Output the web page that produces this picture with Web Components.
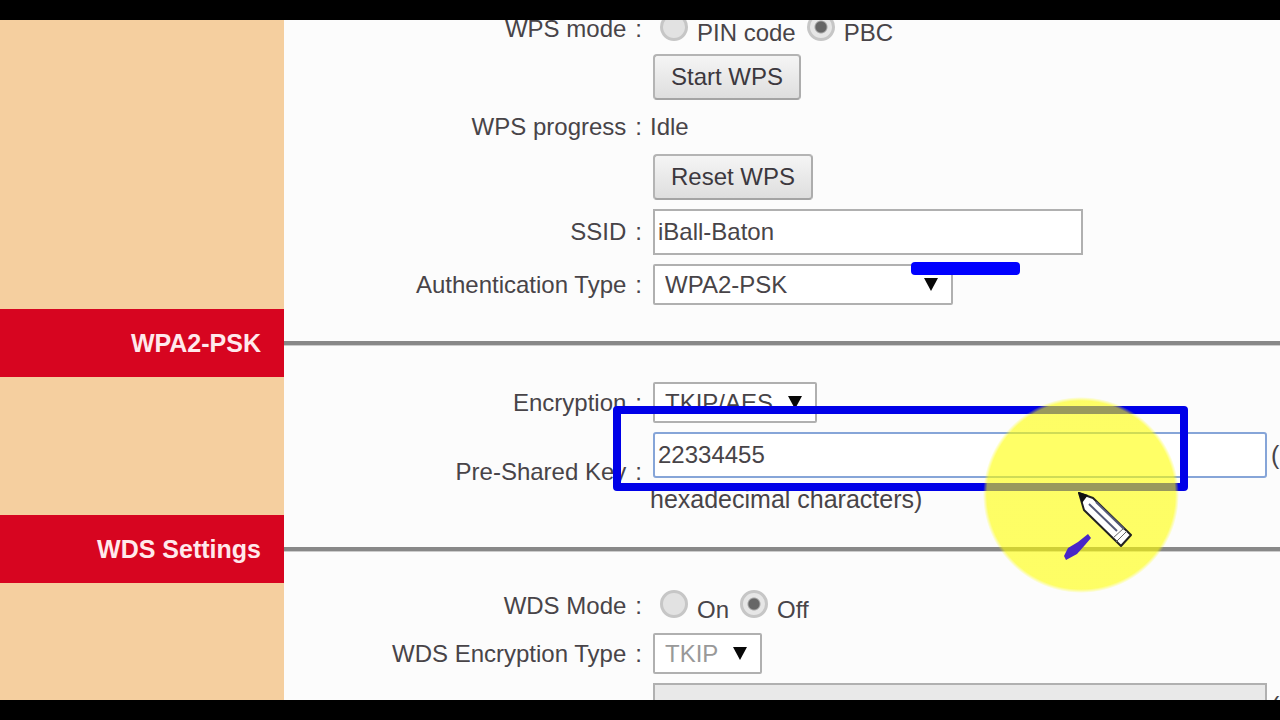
<!DOCTYPE html>
<html lang="en">
<head>
<meta charset="utf-8">
<title>Wireless Settings</title>
<style>
  body { margin: 0; background: #000; }
</style>
</head>
<body>
<wireless-page></wireless-page>

<template id="section-template">
  <style>
    :host { display: grid; grid-template-columns: 284px minmax(0, 1fr); flex: none; }
    :host(:last-of-type) { flex: 1 0 auto; }
    .title { display: none; align-items: center; justify-content: flex-end; height: 68px; padding-right: 23px; background: #d70520; color: #ffe9ec; box-sizing: border-box; }
    .rule { display: none; align-self: center; height: 4px; background: #888; border-bottom: 1px solid #ccc; }
    :host([titled]) .title { display: flex; }
    :host([titled]) .rule { display: block; }
    .side { background: #f5cf9f; }
    .rows { display: flex; flex-direction: column; gap: 9px; padding: 5px 0 4px; min-width: 0; }
    ::slotted(h2) { margin: 0; font-size: 25px; line-height: 28px; font-weight: bold; }
  </style>
  <div class="title"><slot name="title"></slot></div>
  <div class="rule"></div>
  <div class="side"></div>
  <div class="rows"><slot></slot></div>
</template>

<template id="row-template">
  <style>
    :host { display: grid; grid-template-columns: 358px minmax(0, 1fr); align-items: center; column-gap: 8px; min-height: 36px; }
    .label { display: flex; justify-content: flex-end; gap: 9px; white-space: nowrap; }
    :host([bare]) .label { visibility: hidden; }
    .field { display: flex; align-items: center; white-space: nowrap; min-width: 0; }
    ::slotted([slot="hint"]) { display: block; margin-top: 9px; font-size: 25px; line-height: 24px; }
  </style>
  <div class="label"><slot name="label"></slot><span>:</span></div>
  <div>
    <div class="field"><slot></slot></div>
    <slot name="hint"></slot>
  </div>
</template>

<template id="radio-template">
  <style>
    :host { display: flex; gap: 11px; margin-left: 10px; height: 36px; }
    ::slotted(label) { display: flex; align-items: flex-start; gap: 9px; line-height: 28px; }
  </style>
  <slot></slot>
</template>

<template id="marks-template">
  <style>
    :host { position: absolute; top: 0; left: 0; pointer-events: none; }
    svg { display: block; }
  </style>
  <svg width="1280" height="720" viewBox="0 0 1280 720" aria-hidden="true">
    <defs>
      <radialGradient id="spot">
        <stop offset="0.96" stop-color="#ff0" stop-opacity="0.6"/>
        <stop offset="1" stop-color="#ff0" stop-opacity="0"/>
      </radialGradient>
    </defs>
    <rect x="911" y="262" width="109" height="13" rx="4" fill="#00f"/>
    <rect x="617" y="410" width="567" height="77" fill="none" stroke="#0000e8" stroke-width="8" stroke-linejoin="round"/>
    <circle cx="1081" cy="495" r="98" fill="url(#spot)"/>
    <path d="M1088 534L1091 538L1085 545L1077 554L1066 560L1064 556L1068 548L1078 542Z" fill="#4826c8"/>
    <g stroke-linejoin="round">
      <path d="M1079 493L1093 498L1131 535L1121 546L1084 510Z" fill="#fff" stroke="#222" stroke-width="2"/>
      <path d="M1078 492L1088 495L1082 503Z" fill="#111"/>
      <path d="M1089 504L1117 531M1096 502L1124 529" fill="none" stroke="#555a78" stroke-width="2"/>
      <path d="M1124 528L1113 538M1127 531L1116 542" fill="none" stroke="#666" stroke-width="1"/>
    </g>
  </svg>
</template>

<template id="page-template">
  <style>
    :host { display: block; position: relative; height: 100vh; box-sizing: border-box; padding: 20px 0; overflow: hidden; background: #000; color: #484448; font: 24px/28px "Liberation Sans", Arial, sans-serif; }
    main { display: flex; flex-direction: column; height: 100%; overflow: hidden; background: #fcfcfc; }
    main > :first-child { margin-top: -14px; }
    main > :first-child > :first-child { margin-bottom: -2px; }
    button, input, select { font: inherit; color: inherit; box-sizing: border-box; margin: 0; border: 2px solid #b0b0b0; background: #fff; }
    button, input:not([type="radio"]), select { margin-left: 3px; flex: none; }
    button { height: 46px; padding: 0 16px; border-radius: 4px; border-color: #b4b4b4 #adadad #a4a4a4 #b4b4b4; background: linear-gradient(#f5f5f5, #dedede); color: #3c383e; }
    input:not([type="radio"]) { height: 46px; padding: 0 3px; width: 614px; }
    #ssid { width: 430px; }
    #psk { border-color: #86a5d8; border-radius: 3px; outline: none; }
    input:disabled { background: #e9e9e9; }
    select { appearance: none; height: 41px; padding: 0 10px; border-radius: 2px; opacity: 1;
      background: #fff url("data:image/svg+xml,%3Csvg xmlns='http://www.w3.org/2000/svg' width='14' height='13'%3E%3Cpath d='M0 0H14L7 13Z' fill='%23080808'/%3E%3C/svg%3E") no-repeat right 13px center; }
    #auth { width: 300px; }
    #enc { width: 164px; }
    #wdsenc { width: 109px; color: #999; }
    input[type="radio"] { appearance: none; width: 28px; height: 28px; margin-top: 2px; border: 3px solid #c6c6c6; border-radius: 50%; background: #e2e2e2; }
    input[type="radio"]:checked { background: radial-gradient(circle, #666 5px, #e6e6e6 7px); }
    label > span { margin-top: 8px; }
    .after { margin-left: 4px; font-size: 25px; }
  </style>
  <main>
    <settings-section>
      <form-row><span slot="label">WPS mode</span>
        <radio-set role="radiogroup" aria-label="WPS mode">
          <label><input type="radio" name="wps"><span>PIN code</span></label>
          <label><input type="radio" name="wps" checked><span>PBC</span></label>
        </radio-set>
      </form-row>
      <form-row bare><button type="button">Start WPS</button></form-row>
      <form-row><span slot="label">WPS progress</span><span>Idle</span></form-row>
      <form-row bare><button type="button">Reset WPS</button></form-row>
      <form-row><label slot="label" for="ssid">SSID</label><input id="ssid" type="text" value="iBall-Baton"></form-row>
      <form-row><label slot="label" for="auth">Authentication Type</label><select id="auth"><option>WPA2-PSK</option></select></form-row>
    </settings-section>
    <settings-section titled>
      <h2 slot="title">WPA2-PSK</h2>
      <form-row><label slot="label" for="enc">Encryption</label><select id="enc"><option>TKIP/AES</option></select></form-row>
      <form-row><label slot="label" for="psk">Pre-Shared Key</label><input id="psk" type="text" value="22334455"><span class="after">(</span><span slot="hint">hexadecimal characters)</span></form-row>
    </settings-section>
    <settings-section titled>
      <h2 slot="title">WDS Settings</h2>
      <form-row><span slot="label">WDS Mode</span>
        <radio-set role="radiogroup" aria-label="WDS Mode">
          <label><input type="radio" name="wds"><span>On</span></label>
          <label><input type="radio" name="wds" checked><span>Off</span></label>
        </radio-set>
      </form-row>
      <form-row><label slot="label" for="wdsenc">WDS Encryption Type</label><select id="wdsenc" disabled><option>TKIP</option></select></form-row>
      <form-row bare><input type="text" disabled aria-label="WDS key"><span class="after">(</span></form-row>
    </settings-section>
  </main>
  <screen-marks></screen-marks>
</template>

<script>
  const define = (name, templateId) => customElements.define(name, class extends HTMLElement {
    constructor() {
      super();
      this.attachShadow({ mode: "open" })
        .append(document.getElementById(templateId).content.cloneNode(true));
    }
  });
  define("settings-section", "section-template");
  define("form-row", "row-template");
  define("radio-set", "radio-template");
  define("screen-marks", "marks-template");
  define("wireless-page", "page-template");
</script>
</body>
</html>
